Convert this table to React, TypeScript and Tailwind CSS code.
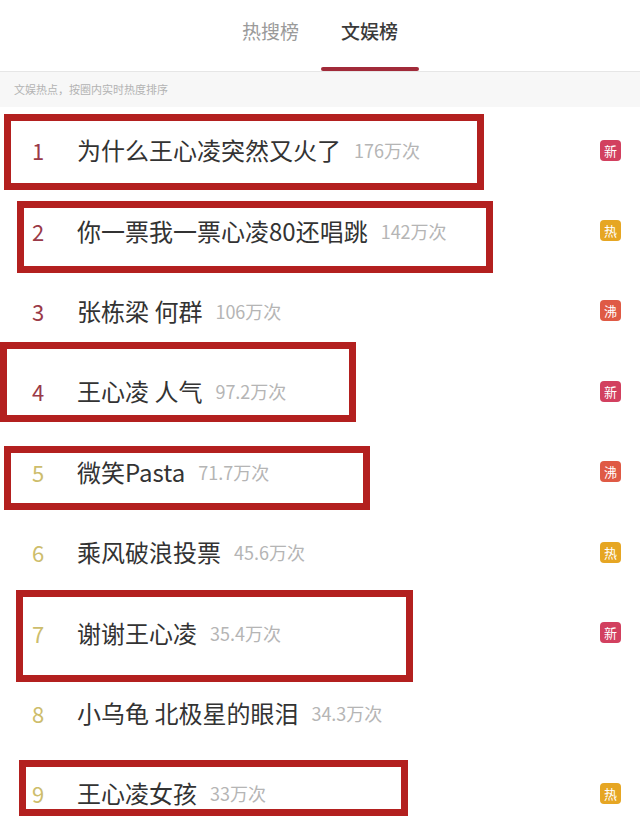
import React from 'react';

type Tag = '新' | '热' | '沸' | null;

interface Item {
  rank: number;
  title: string;
  count: string;
  tag: Tag;
}

const items: Item[] = [
  { rank: 1, title: '为什么王心凌突然又火了', count: '176万次', tag: '新' },
  { rank: 2, title: '你一票我一票心凌80还唱跳', count: '142万次', tag: '热' },
  { rank: 3, title: '张栋梁 何群', count: '106万次', tag: '沸' },
  { rank: 4, title: '王心凌 人气', count: '97.2万次', tag: '新' },
  { rank: 5, title: '微笑Pasta', count: '71.7万次', tag: '沸' },
  { rank: 6, title: '乘风破浪投票', count: '45.6万次', tag: '热' },
  { rank: 7, title: '谢谢王心凌', count: '35.4万次', tag: '新' },
  { rank: 8, title: '小乌龟 北极星的眼泪', count: '34.3万次', tag: null },
  { rank: 9, title: '王心凌女孩', count: '33万次', tag: '热' },
];

// red highlight boxes drawn over the screenshot
const marks = [
  'left-[4px] top-[114px] w-[480px] h-[76px]',
  'left-[17px] top-[201px] w-[476px] h-[72px]',
  'left-[0px] top-[342px] w-[356px] h-[80px]',
  'left-[4px] top-[446px] w-[366px] h-[64px]',
  'left-[16px] top-[590px] w-[397px] h-[92px]',
  'left-[19px] top-[760px] w-[389px] h-[56px]',
];

function TagBadge({ tag }: { tag: Tag }) {
  if (!tag) return null;
  const color =
    tag === '新' ? 'bg-[#d2405f]' : tag === '热' ? 'bg-[#e6a623]' : 'bg-[#df5a45]';
  return (
    <span
      className={`flex h-[21px] w-[21px] items-center justify-center rounded-[4px] text-[13px] leading-none text-white ${color}`}
    >
      {tag}
    </span>
  );
}

function Row({ item }: { item: Item }) {
  const rankColor = item.rank <= 4 ? 'text-[#9a3a48]' : 'text-[#cdbd6c]';
  return (
    <div className="flex h-[80.4px] items-center pl-[27px] pr-[19px]">
      <span className={`w-[22px] text-center text-[22px] leading-none ${rankColor}`}>
        {item.rank}
      </span>
      <span className="ml-[28px] text-[24px] leading-none text-[#333]">{item.title}</span>
      <span className="ml-[13px] text-[18px] leading-none text-[#b5b5b5]">{item.count}</span>
      <span className="ml-auto">
        <TagBadge tag={item.tag} />
      </span>
    </div>
  );
}

export default function App() {
  return (
    <div
      className="relative h-[830px] w-[640px] overflow-hidden bg-white"
      style={{ fontFamily: '"Noto Sans CJK SC", "Noto Sans", sans-serif' }}
    >
      <div className="flex h-[72px] justify-center border-b border-[#e6e6e6]">
        <div className="flex">
          <div className="flex w-[99px] flex-col items-center">
            <span className="mt-[21px] text-[19px] leading-none text-[#9a9a9a]">热搜榜</span>
          </div>
          <div className="flex w-[99px] flex-col items-center">
            <span className="mt-[21px] text-[19px] font-medium leading-none text-[#3a3a3a]">文娱榜</span>
            <span className="mt-[27px] h-[4px] w-[98px] rounded-full bg-[#a12a39]" />
          </div>
        </div>
      </div>

      <div className="flex h-[35px] items-center bg-[#f7f7f7] pl-[14px] text-[11px] text-[#b3b3b3]">
        文娱热点，按圈内实时热度排序
      </div>

      <div className="pt-[3px]">
        {items.map((item) => (
          <Row key={item.rank} item={item} />
        ))}
      </div>

      {marks.map((m, i) => (
        <div key={i} className={`pointer-events-none absolute border-[7px] border-[#b3201f] ${m}`} />
      ))}
    </div>
  );
}
